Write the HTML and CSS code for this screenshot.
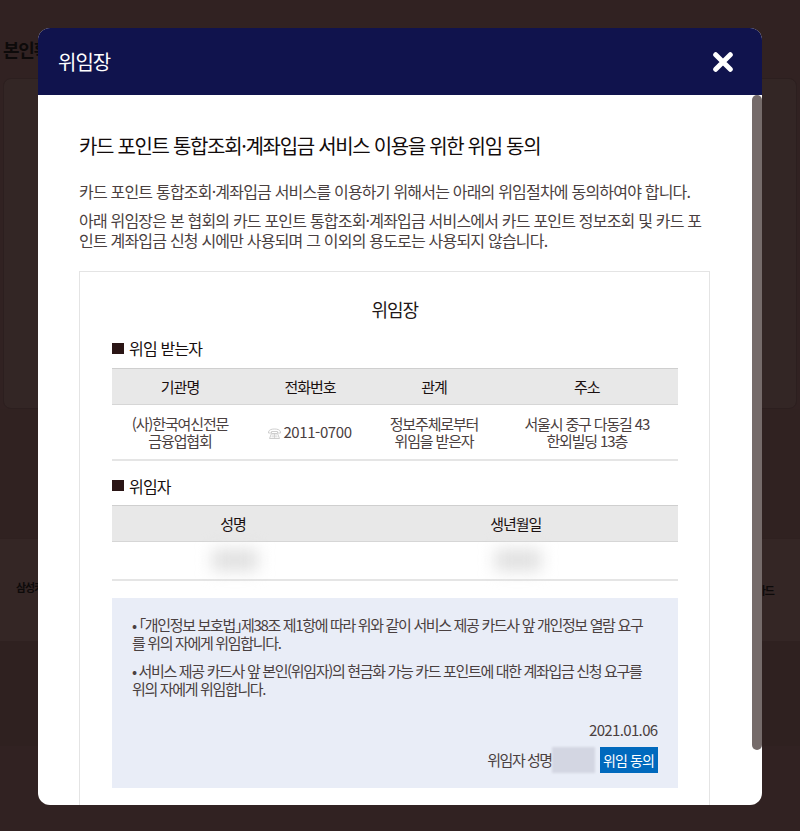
FILE: index.html
```html
<!DOCTYPE html>
<html lang="ko">
<head>
<meta charset="utf-8">
<title>위임장</title>
<link rel="stylesheet" href="styles.css">
</head>
<body>
<div class="page">
  <h1 class="page-title">본인확인</h1>
  <div class="page-card"></div>
  <div class="band band-a"></div>
  <div class="band band-b"><span class="band-l">삼성카드</span><span>카드</span></div>
  <div class="band band-c"></div>
</div>
<div class="overlay">
  <div class="modal">
    <header class="modal-head">
      <h2>위임장</h2>
      <svg class="close" viewBox="0 0 20 20" width="20" height="20"><path d="M2.700 2.700 L17.300 17.300 M17.300 2.700 L2.700 17.300" stroke="#fff" stroke-width="5" stroke-linecap="round"/></svg>
    </header>
    <div class="modal-body">
      <div class="content">
        <h3 class="lead">카드 포인트 통합조회·계좌입금 서비스 이용을 위한 위임 동의</h3>
        <p class="para">카드 포인트 통합조회·계좌입금 서비스를 이용하기 위해서는 아래의 위임절차에 동의하여야 합니다.</p>
        <p class="para">아래 위임장은 본 협회의 카드 포인트 통합조회·계좌입금 서비스에서 카드 포인트 정보조회 및 카드 포<br>인트 계좌입금 신청 시에만 사용되며 그 이외의 용도로는 사용되지 않습니다.</p>
        <section class="doc">
          <h4 class="doc-title">위임장</h4>
          <h5 class="sec"><i class="sq"></i>위임 받는자</h5>
          <table class="tbl">
            <colgroup><col class="c1"><col class="c2"><col class="c3"><col class="c4"></colgroup>
            <thead><tr><th>기관명</th><th>전화번호</th><th>관계</th><th>주소</th></tr></thead>
            <tbody><tr>
              <td>(사)한국여신전문<br>금융업협회</td>
              <td class="tel"><svg class="phone" viewBox="0 0 13 11" width="13" height="11"><path d="M.5 4C1 1.500 4 1 6.500 1S12 1.500 12.500 4V5H9.500V3.500H3.500V5H.5Z M3.500 5.500H9.500L11.500 10.500H1.500Z" fill="none" stroke="#c8c8c8" stroke-width=".9"/><path d="M4 7H9 M3.500 8.800H9.500 M6.500 5.500V10.500" stroke="#c8c8c8" stroke-width=".7"/></svg>2011-0700</td>
              <td>정보주체로부터<br>위임을 받은자</td>
              <td>서울시 중구 다동길 43<br>한외빌딩 13층</td>
            </tr></tbody>
          </table>
          <h5 class="sec sec2"><i class="sq"></i>위임자</h5>
          <table class="tbl tbl2">
            <colgroup><col class="d1"><col></colgroup>
            <thead><tr><th>성명</th><th>생년월일</th></tr></thead>
            <tbody><tr>
              <td><div class="blur"></div></td>
              <td><div class="blur"></div></td>
            </tr></tbody>
          </table>
          <div class="notice">
            <p>• <span class="br">「</span>개인정보 보호법<span class="br">」</span>제38조 제1항에 따라 위와 같이 서비스 제공 카드사 앞 개인정보 열람 요구<br>를 위의 자에게 위임합니다.</p>
            <p>• 서비스 제공 카드사 앞 본인(위임자)의 현금화 가능 카드 포인트에 대한 계좌입금 신청 요구를<br>위의 자에게 위임합니다.</p>
            <div class="date">2021.01.06</div>
            <div class="sign"><span>위임자 성명</span><span class="mask"></span><button class="agree" type="button">위임 동의</button></div>
          </div>
        </section>
      </div>
      <div class="scrollbar"></div>
    </div>
  </div>
</div>
</body>
</html>
```
FILE: styles.css
```css
* { box-sizing: border-box; }
html, body { margin: 0; height: 831px; overflow: hidden; }
body {
  background: #312222;
  font-family: "Noto Sans CJK KR", "Noto Sans", sans-serif;
  color: #433a3a;
}
.page { height: 831px; overflow: hidden; padding-top: 38px; }
.page-title { margin: 0 0 17px 3px; font-size: 18px; line-height: 23px; font-weight: 700; color: #0d0a0a; letter-spacing: -1.2px; }
.page-card { height: 331px; margin: 0 3px; background: #332625; border: 1px solid #2c1f1f; border-radius: 8px; }
.band-a { height: 129px; background: #302221; }
.band-b {
  height: 103px;
  background: #342625;
  border-top: 1px solid #2f2120;
  display: flex;
  justify-content: space-between;
  align-items: center;
  padding: 0 26px 0 16px;
  font-size: 11px;
  font-weight: 700;
  color: #0d0a0a;
  letter-spacing: -1px;
}
.band-l { margin-bottom: 6px; }
.band-c { height: 105px; background: #2f2120; }

.overlay { position: absolute; inset: 0; }
.modal {
  position: absolute;
  left: 38px; top: 28px;
  width: 723.500px; height: 777px;
  background: #fff;
  border-radius: 12px;
  overflow: hidden;
  display: flex;
  flex-direction: column;
}
.modal-head {
  flex: none;
  height: 67px;
  background: #10134d;
  display: flex;
  align-items: center;
  justify-content: space-between;
  padding: 0 28.500px 0 20px;
}
.modal-head h2 { margin: 0; color: #fff; font-size: 20px; font-weight: 400; letter-spacing: -1px; }
.close { display: block; }
.modal-body { flex: 1; position: relative; overflow: hidden; }
.scrollbar {
  position: absolute;
  right: 0; top: 0;
  width: 10px; height: 655px;
  background: #756b6a;
  border-radius: 5px;
}
.content { padding: 37px 52px 0 41px; }
.lead { margin: 0 0 22px; font-size: 20px; line-height: 27px; font-weight: 400; color: #120b0b; letter-spacing: -1.320px; }
.para { margin: 0 0 9px; font-size: 16px; line-height: 20px; color: #4a4040; letter-spacing: -0.8px; white-space: nowrap; }
.doc { margin-top: 21px; border: 1px solid #e4e4e4; padding: 24px 31px 0 32px; height: 600px; }
.doc-title { margin: 0 0 14px; text-align: center; font-size: 18px; line-height: 26px; font-weight: 400; color: #221717; letter-spacing: -1px; }
.sec { margin: 0 0 8px; font-size: 16px; line-height: 24px; font-weight: 400; color: #160d0d; letter-spacing: -0.8px; display: flex; align-items: center; }
.sq { width: 12px; height: 11px; background: #2a1515; margin-right: 5px; flex: none; }
.sec2 { margin-top: 13px; margin-bottom: 7px; }
.tbl { width: 100%; border-collapse: collapse; table-layout: fixed; }
.c1 { width: 136px; } .c2 { width: 124px; } .c3 { width: 124px; } .d1 { width: 242px; }
.tbl th {
  height: 36px; padding: 0;
  background: #e8e8e8;
  border-top: 1px solid #cfcfcf;
  border-bottom: 1px solid #d6d6d6;
  font-size: 15px; font-weight: 400; color: #1a1010; letter-spacing: -1px;
}
.tbl td {
  height: 55px; padding: 0;
  text-align: center;
  border-bottom: 2px solid #e5e5e5;
  font-size: 15px; line-height: 17px; color: #4a4040; letter-spacing: -1.150px;
}
.tbl .tel { white-space: nowrap; letter-spacing: -0.4px; }
.phone { vertical-align: -1px; margin-right: 2px; }
.tbl2 td { height: 39px; }
.blur { width: 46px; height: 22px; margin: 0 auto; background: #e0e0e0; filter: blur(8px); transform: translateX(2px); }
.notice { margin-top: 17px; height: 190px; background: #e9edf7; padding: 18px 20px 0 20px; font-size: 15px; line-height: 18px; color: #4a4040; letter-spacing: -1.340px; }
.notice p { margin: 0 0 10px; white-space: nowrap; }
.br { font-feature-settings: "halt"; }
.date { margin-top: 22px; text-align: right; line-height: 20px; letter-spacing: -0.650px; }
.sign { display: flex; justify-content: flex-end; align-items: center; margin-top: 7px; letter-spacing: -1.500px; }
.mask { width: 43px; height: 26px; background: #d3d6e2; filter: blur(1px); margin-right: 5px; }
.agree { width: 58px; height: 26px; padding: 0; border: 0; background: #0069bd; color: #fff; font: inherit; font-size: 14px; letter-spacing: -0.9px; }
```
